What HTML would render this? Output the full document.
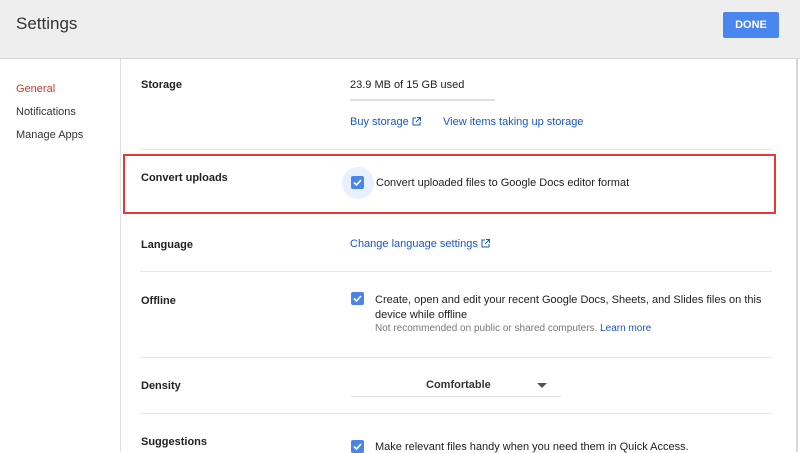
<!DOCTYPE html>
<html><head><style>
body{margin:0;width:800px;height:452px;overflow:hidden;background:#fff;font-family:"Liberation Sans",Arial,sans-serif;position:relative;color:#202124}
.a{position:absolute;white-space:nowrap}
.hdr{left:0;top:0;width:800px;height:58px;background:#eeeeee;border-bottom:1px solid #d6d6d6}
.lbl{font-size:11px;font-weight:bold;color:#202124}
.txt{font-size:11px;color:#202124}
.lnk{font-size:11px;color:#1a56c8}
.sep{height:1px;background:#e8e8e8;left:140px;width:632px}
.cb{width:13px;height:13px;background:#4a86e8;border-radius:2px}
.cb svg{display:block}
.ext{display:inline-block;vertical-align:-1px;margin-left:3px}
</style></head><body>
<div class="a hdr"></div>
<div class="a" style="left:16px;top:14px;font-size:17px;color:#333">Settings</div>
<div class="a" style="left:723px;top:12px;width:56px;height:26px;background:#4a86f0;border-radius:2px;color:#fff;font-size:11px;font-weight:bold;text-align:center;line-height:27px">DONE</div>
<div class="a" style="left:120px;top:59px;width:1px;height:393px;background:#e0e0e0"></div>
<div class="a" style="left:796px;top:59px;width:2px;height:393px;background:#d8d8d8"></div>
<div class="a" style="left:16px;top:83px;font-size:11px;color:#c5392c">General</div>
<div class="a" style="left:16px;top:106px;font-size:11px;color:#333">Notifications</div>
<div class="a" style="left:16px;top:129px;font-size:11px;color:#333">Manage Apps</div>

<div class="a lbl" style="left:141px;top:79px">Storage</div>
<div class="a txt" style="left:350px;top:79px">23.9 MB of 15 GB used</div>
<div class="a" style="left:350px;top:99px;width:145px;height:2px;background:#e0e0e0"></div>
<div class="a lnk" style="left:350px;top:116px">Buy storage<svg class="ext" width="9" height="9" viewBox="0 0 9 9"><path d="M4 1H1v7h7V5M5 0.5h3.5V4M8.5 0.5L4 5" stroke="#1a56c8" fill="none"/></svg></div>
<div class="a lnk" style="left:443px;top:116px">View items taking up storage</div>
<div class="a sep" style="top:149px"></div>

<div class="a" style="left:123px;top:154px;width:649px;height:56px;border:2px solid #e53935"></div>
<div class="a lbl" style="left:141px;top:172px">Convert uploads</div>
<div class="a" style="left:342px;top:167px;width:32px;height:32px;border-radius:50%;background:#e8f0fe"></div>
<div class="a cb" style="left:351px;top:176px"><svg width="13" height="13"><path d="M3 6.5l2.5 2.5 4.5-5" stroke="#fff" stroke-width="1.6" fill="none"/></svg></div>
<div class="a txt" style="left:376px;top:177px">Convert uploaded files to Google Docs editor format</div>

<div class="a lbl" style="left:141px;top:239px">Language</div>
<div class="a lnk" style="left:350px;top:238px">Change language settings<svg class="ext" width="9" height="9" viewBox="0 0 9 9"><path d="M4 1H1v7h7V5M5 0.5h3.5V4M8.5 0.5L4 5" stroke="#1a56c8" fill="none"/></svg></div>
<div class="a sep" style="top:271px"></div>

<div class="a lbl" style="left:141px;top:295px">Offline</div>
<div class="a cb" style="left:351px;top:292px"><svg width="13" height="13"><path d="M3 6.5l2.5 2.5 4.5-5" stroke="#fff" stroke-width="1.6" fill="none"/></svg></div>
<div class="a txt" style="left:375px;top:293px;line-height:15px">Create, open and edit your recent Google Docs, Sheets, and Slides files on this<br>device while offline</div>
<div class="a" style="left:375px;top:323px;font-size:10px;color:#777">Not recommended on public or shared computers. <span style="color:#1a56c8">Learn more</span></div>
<div class="a sep" style="top:357px"></div>

<div class="a lbl" style="left:141px;top:380px">Density</div>
<div class="a" style="left:426px;top:379px;font-size:11px;font-weight:bold;color:#333">Comfortable</div>
<div class="a" style="left:537px;top:383px;width:0;height:0;border-left:5px solid transparent;border-right:5px solid transparent;border-top:5px solid #555"></div>
<div class="a" style="left:351px;top:396px;width:210px;height:1px;background:#ddd"></div>
<div class="a sep" style="top:413px"></div>

<div class="a lbl" style="left:141px;top:436px">Suggestions</div>
<div class="a cb" style="left:351px;top:440px"><svg width="13" height="13"><path d="M3 6.5l2.5 2.5 4.5-5" stroke="#fff" stroke-width="1.6" fill="none"/></svg></div>
<div class="a txt" style="left:375px;top:441px">Make relevant files handy when you need them in Quick Access.</div>
</body></html>
